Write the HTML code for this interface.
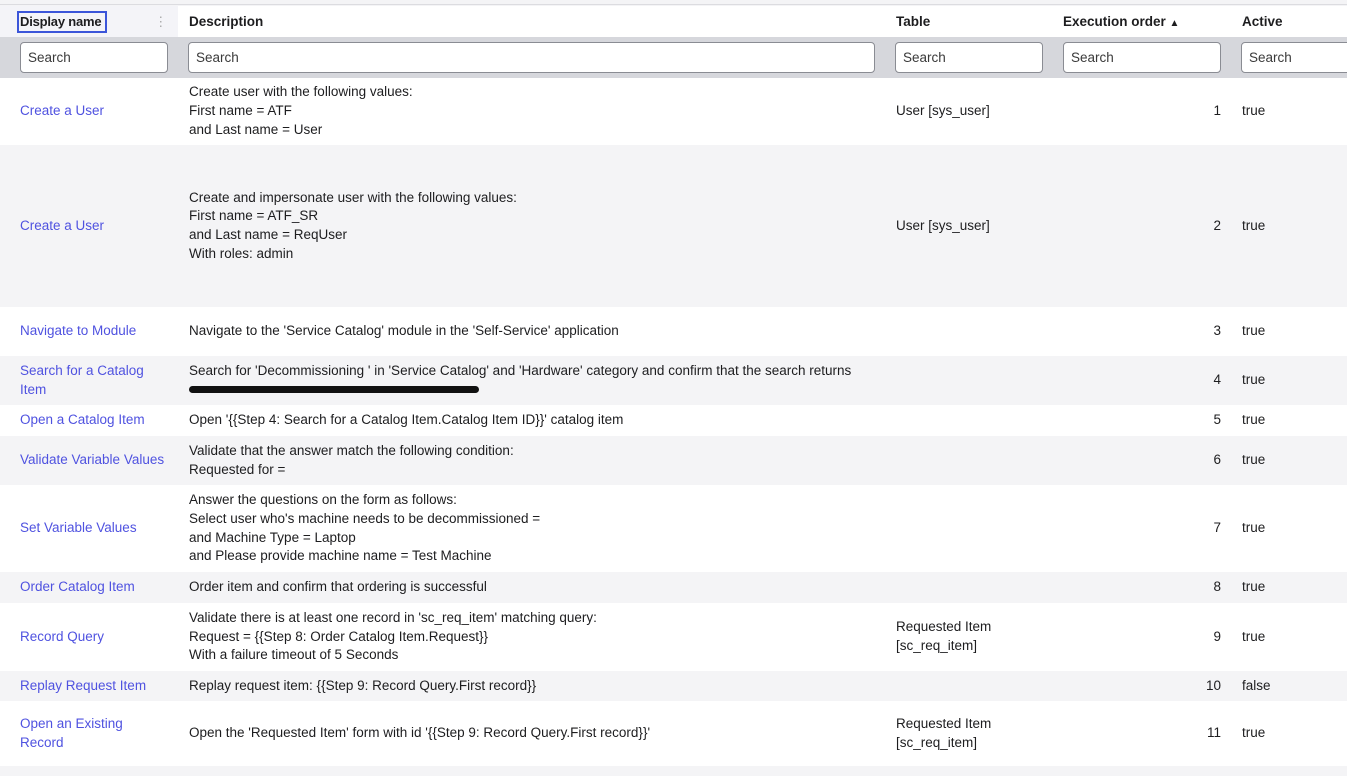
<!DOCTYPE html>
<html><head><style>
*{margin:0;padding:0;box-sizing:border-box}
body{width:1347px;height:776px;overflow:hidden;background:#f4f4f6;font-family:"Liberation Sans",sans-serif;font-size:13.5px;color:#1d1d1f;position:relative}
.top{position:absolute;left:0;top:0;width:1347px;height:5px;background:#f4f4f6;border-bottom:1px solid #dcdce0}
.hdr{position:absolute;top:6px;left:0;width:1347px;height:31px;background:#fff;font-weight:bold;font-size:13.5px}
.hdr div{position:absolute;top:0;height:31px;line-height:31px;white-space:nowrap}
.srch{position:absolute;top:37px;left:0;width:1347px;height:41px;background:#d6d7dc}
.srch div{position:absolute;top:5px;height:31px;background:#fff;border:1px solid #8a8c93;border-radius:4px;padding-left:7px;line-height:29px;color:#3a3a3a;font-size:13.5px}
.row{position:absolute;left:0;width:1347px}
.w{background:#fff}.g{background:#f4f4f6}
.c{position:absolute;top:0;height:100%;display:flex;align-items:center;line-height:18.7px;white-space:nowrap}
.n{left:20px;width:160px;color:#4f52e0}
.d{left:189px;width:690px}
.t{left:896px;width:150px}
.e{left:1063px;width:158px;justify-content:flex-end}
.a{left:1242px}
</style></head><body>
<div class="top"></div>
<div class="hdr">
<div style="left:0;width:178px;background:#f4f4f8"></div>
<div style="left:17px;top:5px;height:22px;line-height:18px;width:90px;border:2px solid #3b55d9;padding-left:1px;font-size:13px;letter-spacing:-0.2px;background:#f4f4f8">Display name</div>
<div style="left:154px;color:#aaa;font-weight:normal">⋮</div>
<div style="left:189px">Description</div>
<div style="left:896px">Table</div>
<div style="left:1063px">Execution order <span style="font-size:10px">▲</span></div>
<div style="left:1242px">Active</div>
</div>
<div class="srch">
<div style="left:20px;width:148px">Search</div>
<div style="left:188px;width:687px">Search</div>
<div style="left:895px;width:148px">Search</div>
<div style="left:1063px;width:158px">Search</div>
<div style="left:1241px;width:120px">Search</div>
</div>

<div class="row w" style="top:78px;height:67px"><div class="c n">Create a User</div><div class="c d">Create user with the following values:<br>First name = ATF<br>and Last name = User</div><div class="c t">User [sys_user]</div><div class="c e">1</div><div class="c a">true</div></div>
<div class="row g" style="top:145px;height:162px"><div class="c n">Create a User</div><div class="c d">Create and impersonate user with the following values:<br>First name = ATF_SR<br>and Last name = ReqUser<br>With roles: admin</div><div class="c t">User [sys_user]</div><div class="c e">2</div><div class="c a">true</div></div>
<div class="row w" style="top:307px;height:49px"><div class="c n">Navigate to Module</div><div class="c d">Navigate to the 'Service Catalog' module in the 'Self-Service' application</div><div class="c e">3</div><div class="c a">true</div></div>
<div class="row g" style="top:356px;height:49px"><div class="c n">Search for a Catalog<br>Item</div><div class="c d"><div>Search for 'Decommissioning ' in 'Service Catalog' and 'Hardware' category and confirm that the search returns<br><span style="display:inline-block;width:290px;height:7px;background:#111;border-radius:4px;vertical-align:middle"></span></div></div><div class="c e">4</div><div class="c a">true</div></div>
<div class="row w" style="top:405px;height:31px"><div class="c n">Open a Catalog Item</div><div class="c d">Open '{{Step 4: Search for a Catalog Item.Catalog Item ID}}' catalog item</div><div class="c e">5</div><div class="c a">true</div></div>
<div class="row g" style="top:436px;height:49px"><div class="c n">Validate Variable Values</div><div class="c d">Validate that the answer match the following condition:<br>Requested for =</div><div class="c e">6</div><div class="c a">true</div></div>
<div class="row w" style="top:485px;height:87px"><div class="c n">Set Variable Values</div><div class="c d">Answer the questions on the form as follows:<br>Select user who's machine needs to be decommissioned =<br>and Machine Type = Laptop<br>and Please provide machine name = Test Machine</div><div class="c e">7</div><div class="c a">true</div></div>
<div class="row g" style="top:572px;height:31px"><div class="c n">Order Catalog Item</div><div class="c d">Order item and confirm that ordering is successful</div><div class="c e">8</div><div class="c a">true</div></div>
<div class="row w" style="top:603px;height:68px"><div class="c n">Record Query</div><div class="c d">Validate there is at least one record in 'sc_req_item' matching query:<br>Request = {{Step 8: Order Catalog Item.Request}}<br>With a failure timeout of 5 Seconds</div><div class="c t">Requested Item<br>[sc_req_item]</div><div class="c e">9</div><div class="c a">true</div></div>
<div class="row g" style="top:671px;height:30px"><div class="c n">Replay Request Item</div><div class="c d">Replay request item: {{Step 9: Record Query.First record}}</div><div class="c e">10</div><div class="c a">false</div></div>
<div class="row w" style="top:701px;height:65px"><div class="c n">Open an Existing<br>Record</div><div class="c d">Open the 'Requested Item' form with id '{{Step 9: Record Query.First record}}'</div><div class="c t">Requested Item<br>[sc_req_item]</div><div class="c e">11</div><div class="c a">true</div></div>
</body></html>
